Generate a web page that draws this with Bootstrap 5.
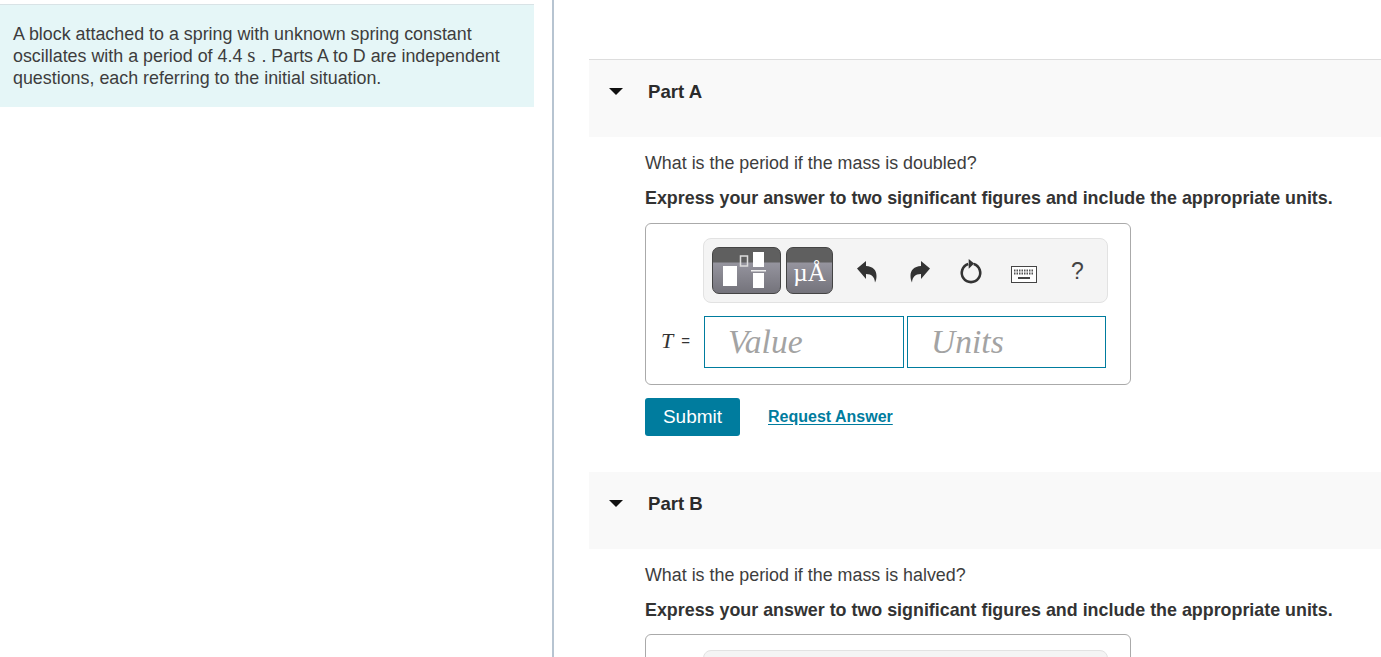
<!DOCTYPE html>
<html lang="en">
<head>
    <meta charset="UTF-8">
    <meta name="viewport" content="width=device-width, initial-scale=1.0">
    <title>Spring period question</title>
    <link href="https://cdn.jsdelivr.net/npm/bootstrap@5.3.0/dist/css/bootstrap.min.css" rel="stylesheet">
    <style>
        html, body { height: 657px; overflow: hidden; }
        body { font-family: "Liberation Sans", Arial, sans-serif; font-size: 17.88px; line-height: 22px; color: #3d3d3d; background: #fff; }
        .page-wrap { height: 657px; overflow: hidden; }
        .left-pane { width: 554px; height: 657px; padding: 4px 18px 0 0; border-right: 2px solid #b7c4d1; flex: none; }
        .intro-box { height: 103px; background: #e5f6f7; border-top: 1px solid #d9e3e6; padding: 18px 13px 0; }
        .serif-unit { font-family: "Liberation Serif", serif; font-size: 21px; line-height: 0; padding-right: 1px; }
        .right-pane { flex: 1; height: 657px; overflow: hidden; padding: 59px 0 0 35px; min-width: 0; }
        .part-head { height: 78px; background: #f9f9f9; padding: 21px 0 0 20px; font-weight: 700; font-size: 18.6px; color: #2b2b2b; gap: 25px; }
        .part-head.first-part { border-top: 1px solid #ddd; }
        .part-head.later-part { height: 77px; }
        .caret-down { width: 0; height: 0; margin-top: 7px; border-left: 7px solid transparent; border-right: 7px solid transparent; border-top: 7px solid #111; }
        .part-body { padding: 15px 0 0 56px; height: 335px; }
        .part-body.cut-off { height: 108px; overflow: hidden; }
        .q-text { margin: 0 0 13px; }
        .q-hint { margin: 0 0 14px; font-weight: 700; color: #333; }
        .cut-off .q-hint { margin-bottom: 13px; }
        .answer-box { width: 486px; height: 162px; border: 1px solid #aaa; border-radius: 6px; padding: 14px 0 0 57px; background: #fff; }
        .cut-off .answer-box { padding-top: 15px; }
        .tool-bar { width: 405px; height: 65px; background: #f4f4f4; border: 1px solid #e2e2e2; border-radius: 8px; padding: 8px 0 0 8px; gap: 5px; margin-bottom: 13px; }
        .tmpl-btn { height: 47px; border-radius: 7px; border: 1px solid #444; background: linear-gradient(#5f5f5f 0, #5f5f5f 14px, #95949e 15px, #74737b 100%); }
        .tmpl-one { width: 69px; }
        .tmpl-two { width: 47px; color: #fff; font-family: "Liberation Serif", serif; font-size: 25px; line-height: 24px; padding-top: 13px; text-align: center; }
        .tool-icons { padding: 11px 0 0 2px; }
        .tool-slot { width: 53px; height: 26px; color: #333; }
        .tool-slot svg { display: block; }
        .tool-slot .refresh-icon { margin-left: -3px; }
        .tool-slot .keys-icon { margin-left: -2px; }
        .help-mark { font-size: 23px; color: #444; line-height: 26px; padding-right: 2px; }
        .eq-row { margin-left: -42px; }
        .eq-label { width: 43px; font-size: 15px; padding: 14px 0 0 0; white-space: nowrap; color: #333; gap: 8px; }
        .eq-label i { font-family: "Liberation Serif", serif; font-size: 22px; }
        .eq-input { width: 200px; height: 52px; border: 1px solid #007c9e; border-radius: 0; padding: 0 0 0 23px; margin-right: 3px; font-family: "Liberation Serif", serif; font-style: italic; font-size: 33.6px; }
        .eq-input.units-input { width: 199px; }
        .eq-input::placeholder { color: #a3a3a3; opacity: 1; }
        .action-row { margin-top: 13px; gap: 28px; }
        .submit-btn { width: 95px; height: 38px; background: #007c9e; border: 0; border-radius: 3px; color: #fff; font-size: 19px; padding: 0; }
        .request-link { color: #007c9e; font-weight: 700; font-size: 16px; text-underline-offset: 2px; margin-top: -1px; }
    </style>
</head>
<body>
    <div class="page-wrap d-flex">
        <div class="left-pane">
            <div class="intro-box">A block attached to a spring with unknown spring constant oscillates with a period of 4.4 <span class="serif-unit">s</span> . Parts A to D are independent questions, each referring to the initial situation.</div>
        </div>

        <div class="right-pane">
            <!-- Part A -->
            <div class="part-head first-part d-flex">
                <span class="caret-down"></span><span>Part A</span>
            </div>
            <div class="part-body">
                <p class="q-text">What is the period if the mass is doubled?</p>
                <p class="q-hint">Express your answer to two significant figures and include the appropriate units.</p>
                <div class="answer-box">
                    <div class="tool-bar d-flex">
                        <div class="tmpl-btn tmpl-one">
                            <svg width="67" height="45" viewBox="0 0 67 45">
                                <rect x="10" y="18" width="14" height="20" fill="#fff"/>
                                <rect x="27.5" y="8" width="7" height="10" fill="none" stroke="#ddd" stroke-width="1.5"/>
                                <rect x="40" y="4" width="11" height="15" fill="#fff"/>
                                <rect x="38" y="22" width="15" height="1.5" fill="#eee"/>
                                <rect x="40" y="25" width="11" height="15" fill="#fff"/>
                            </svg>
                        </div>
                        <div class="tmpl-btn tmpl-two">µÅ</div>
                        <div class="tool-icons d-flex">
                            <div class="tool-slot d-flex justify-content-center">
                                <svg width="24" height="26" viewBox="0 0 24 26"><path fill="currentColor" d="M2 10.500 11 3v5c7 .5 10.500 4 10.500 10 0 2.500-.5 4.500-1.500 6.500-.5-5.500-3-8.500-9-8.500v5z"/></svg>
                            </div>
                            <div class="tool-slot d-flex justify-content-center">
                                <svg width="24" height="26" viewBox="0 0 24 26"><path fill="currentColor" d="M22 10.500 13 3v5C6 8.500 2.500 12 2.500 18c0 2.500.5 4.500 1.500 6.500.5-5.500 3-8.500 9-8.500v5z"/></svg>
                            </div>
                            <div class="tool-slot d-flex justify-content-center">
                                <svg class="refresh-icon" width="24" height="26" viewBox="0 0 26 26"><path fill="none" stroke="currentColor" stroke-width="2.800" d="M10 5.500a10 10 0 1 0 6 0"/><path fill="currentColor" d="M10.500 0v10.500l6-5.500z"/></svg>
                            </div>
                            <div class="tool-slot d-flex justify-content-center">
                                <svg class="keys-icon" width="27" height="26" viewBox="0 0 27 26"><rect x=".5" y="8.500" width="25" height="16" fill="#fff" stroke="#444"/><path stroke="#555" stroke-width="2" stroke-dasharray="1.500 1" d="M3 12.500h20M3 15.500h20"/><path stroke="#444" stroke-width="2" d="M7 20h12"/></svg>
                            </div>
                            <div class="tool-slot text-center help-mark">?</div>
                        </div>
                    </div>
                    <div class="eq-row d-flex">
                        <div class="eq-label d-flex"><i>T</i><span>=</span></div>
                        <input class="eq-input" type="text" placeholder="Value">
                        <input class="eq-input units-input" type="text" placeholder="Units">
                    </div>
                </div>
                <div class="action-row d-flex align-items-center">
                    <button class="btn submit-btn" type="button">Submit</button>
                    <a class="request-link" href="#">Request Answer</a>
                </div>
            </div>

            <!-- Part B -->
            <div class="part-head later-part d-flex">
                <span class="caret-down"></span><span>Part B</span>
            </div>
            <div class="part-body cut-off">
                <p class="q-text">What is the period if the mass is halved?</p>
                <p class="q-hint">Express your answer to two significant figures and include the appropriate units.</p>
                <div class="answer-box">
                    <div class="tool-bar d-flex"></div>
                </div>
            </div>
        </div>
    </div>

    <script src="https://cdn.jsdelivr.net/npm/bootstrap@5.3.0/dist/js/bootstrap.bundle.min.js"></script>
</body>
</html>
